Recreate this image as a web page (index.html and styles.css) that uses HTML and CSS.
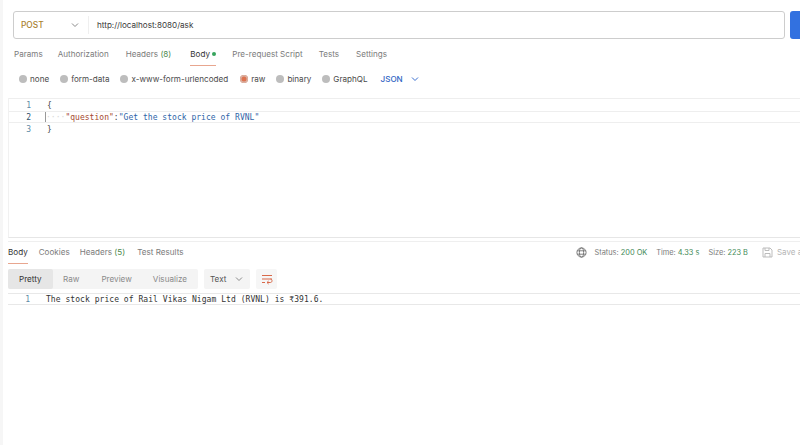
FILE: index.html
```html
<!DOCTYPE html>
<html lang="en">
<head>
<meta charset="utf-8">
<title>POST ask</title>
<link rel="stylesheet" href="styles.css">
</head>
<body>
<div class="app">
  <div class="urlrow">
    <div class="urlbox">
      <div class="method"><span class="post">POST</span>
        <svg class="chev" width="8" height="6" viewBox="0 0 8 6"><path d="M1 1.5l3 3 3-3" fill="none" stroke="#8a8a8a" stroke-width="1"/></svg>
      </div>
      <div class="url">http://localhost:8080/ask</div>
    </div>
    <div class="send"></div>
  </div>
  <div class="tabs reqtabs">
    <span class="tab t1">Params</span>
    <span class="tab t2">Authorization</span>
    <span class="tab t3">Headers <em>(8)</em></span>
    <span class="tab t4 active">Body <i class="dot"></i></span>
    <span class="tab t5">Pre-request Script</span>
    <span class="tab t6">Tests</span>
    <span class="tab t7">Settings</span>
  </div>
  <div class="bodyopts">
    <span class="opt o1"><i class="radio"></i>none</span>
    <span class="opt o2"><i class="radio"></i>form-data</span>
    <span class="opt o3"><i class="radio"></i>x-www-form-urlencoded</span>
    <span class="opt o4"><i class="radio on"></i>raw</span>
    <span class="opt o5"><i class="radio"></i>binary</span>
    <span class="opt o6"><i class="radio"></i>GraphQL</span>
    <span class="lang">JSON
      <svg width="8" height="6" viewBox="0 0 8 6"><path d="M1 1.5l3 3 3-3" fill="none" stroke="#3a6fd0" stroke-width="1"/></svg>
    </span>
  </div>
  <div class="editor">
    <div class="line"><span class="num">1</span><span class="code">{</span></div>
    <div class="line current"><span class="num dark">2</span><span class="code"><span class="ws">····</span><span class="key">"question"</span>:<span class="str">"Get the stock price of RVNL"</span></span></div>
    <div class="line"><span class="num">3</span><span class="code">}</span></div>
  </div>
  <div class="resphead">
    <div class="tabs resptabs">
      <span class="tab r1 active">Body</span>
      <span class="tab r2">Cookies</span>
      <span class="tab r3">Headers <em>(5)</em></span>
      <span class="tab r4">Test Results</span>
    </div>
    <div class="stats">
      <svg class="globe" width="11" height="11" viewBox="0 0 11 11" fill="none" stroke="#6f6f6f" stroke-width=".9"><circle cx="5.5" cy="5.5" r="4.6"/><ellipse cx="5.5" cy="5.5" rx="2.1" ry="4.6"/><path d="M1.2 3.8h8.6M1.2 7.2h8.6"/></svg>
      <span class="stat">Status: <b>200 OK</b></span>
      <span class="stat">Time: <b>4.33 s</b></span>
      <span class="stat">Size: <b>223 B</b></span>
      <span class="save">
        <svg width="11" height="11" viewBox="0 0 11 11" fill="none" stroke="#b5b5b5" stroke-width=".9"><path d="M1 1h7l2 2v7H1z"/><path d="M3 1v2.5h4V1M3 10V6.5h5V10"/></svg>
        Save as
      </span>
    </div>
  </div>
  <div class="viewbar">
    <div class="seg">
      <span class="segitem sel">Pretty</span>
      <span class="segitem raw">Raw</span>
      <span class="segitem prev">Preview</span>
      <span class="segitem vis">Visualize</span>
    </div>
    <div class="fmt">Text
      <svg width="8" height="6" viewBox="0 0 8 6"><path d="M1 1.5l3 3 3-3" fill="none" stroke="#8a8a8a" stroke-width="1"/></svg>
    </div>
    <div class="wrap">
      <svg width="12" height="11" viewBox="0 0 12 11" fill="none" stroke="#d9694a" stroke-width="1"><path d="M1 1.5h10M1 5h10M1 8.5h3M6 8.5h3.5c2 0 2-3.5 0-3.5M7.6 7l-1.6 1.5 1.6 1.5"/></svg>
    </div>
  </div>
  <div class="output">
    <span class="num">1</span><span class="outtext">The stock price of Rail Vikas Nigam Ltd (RVNL) is ₹391.6.</span>
  </div>
</div>
</body>
</html>
```
FILE: styles.css
```css
* { box-sizing: border-box; }
html, body { margin: 0; height: 100%; background: #fff; overflow: hidden; }
body { font-family: Inter, "Liberation Sans", sans-serif; color: #6b6b6b; font-size: 8.1px; }
.app { width: 800px; height: 445px; border-left: 3px solid #f6f6f6; padding-top: 11px; overflow: hidden; }

.urlrow { display: flex; gap: 5px; margin-left: 10px; height: 28px; width: 800px; }
.urlbox { width: 772px; flex: none; border: 1px solid #cdcdcd; border-radius: 3px; display: flex; align-items: center; }
.method { width: 75px; height: 18px; padding-left: 7px; display: flex; align-items: center; border-right: 1px solid #efefef; }
.post { color: #a9812f; font-weight: 500; font-size: 8.4px; }
.chev { margin-left: 27px; }
.url { padding-left: 8px; color: #3a3a3a; font-size: 8.1px; }
.send { width: 40px; flex: none; background: #3271e0; border-radius: 3px 0 0 3px; }

.tabs { display: flex; }
.tab { color: #7b7b7b; white-space: nowrap; }
.tab em { font-style: normal; color: #4d8a4d; }
.tab.active { color: #333; border-bottom: 1px solid #e8a68f; }
.reqtabs { margin-left: 11px; margin-top: 7px; height: 20px; }
.reqtabs .tab { padding-top: 2px; height: 20px; line-height: 12px; }
.t2 { margin-left: 15px; } .t3 { margin-left: 17px; } .t4 { margin-left: 19px; }
.t5 { margin-left: 16px; } .t6 { margin-left: 16px; } .t7 { margin-left: 17px; }
.dot { display: inline-block; width: 4px; height: 4px; border-radius: 50%; background: #37a45d; margin-left: 0; vertical-align: 1px; }

.bodyopts { display: flex; align-items: center; margin-left: 16px; margin-top: 6px; height: 14px; color: #4a4a4a; }
.opt { display: flex; align-items: center; gap: 3px; margin-right: 11px; white-space: nowrap; }
.o3 { margin-right: 12px; }
.radio { width: 8px; height: 8px; border-radius: 50%; background: #bdbdbd; flex: none; }
.radio.on { background: #dd7350; box-shadow: inset 0 0 0 1.5px #d9b3a5; }
.lang { color: #2f65c4; font-weight: 500; margin-left: 2px; display: flex; align-items: center; gap: 8px; }

.editor { margin-left: 5px; margin-top: 12px; height: 140px; width: 800px; border-top: 1px solid #eeeeee; border-bottom: 1px solid #e6e6e6; border-left: 1px solid #f1f1f1; font-family: "DejaVu Sans Mono", monospace; font-size: 8px; }
.line { display: flex; height: 12px; line-height: 12px; color: #444; }
.line .num, .line .code { padding-top: 1px; }
.line.current { border-top: 1px solid #eeeeee; border-bottom: 1px solid #eeeeee; line-height: 10px; }
.num { width: 22px; text-align: right; color: #5d8aa5; flex: none; font-family: "DejaVu Sans Mono", monospace; font-size: 8px; }
.num.dark { color: #2f4f6a; }
.code { margin-left: 16px; white-space: pre; letter-spacing: .03px; }
.current .code { border-left: 1px solid #999; margin-left: 14px; }
.ws { color: #d6d6d6; }
.key { color: #a5492f; }
.str { color: #2f65a8; }

.resphead { display: flex; margin-left: 5px; margin-top: 3px; height: 28px; border-top: 1px solid #efefef; width: 792px; }
.resptabs { padding-top: 3px; flex: none; }
.resptabs .tab { height: 19px; line-height: 14px; }
.r2 { margin-left: 11px; } .r3 { margin-left: 10px; } .r4 { margin-left: 12px; }
.stats { display: flex; align-items: center; gap: 9px; height: 20px; color: #7b7b7b; font-size: 7.4px; white-space: nowrap; margin-left: 393px; flex: none; }
.globe { margin-right: -2px; }
.stat b { font-weight: 400; color: #3f8a58; }
.save { display: flex; align-items: center; gap: 4px; color: #b5b5b5; margin-left: 5px; font-size: 8px; }

.viewbar { display: flex; margin-left: 5px; gap: 6px; height: 24px; }
.seg { display: flex; background: #f4f4f4; border-radius: 2px; width: 190px; height: 20px; }
.segitem { line-height: 20px; color: #8a8a8a; padding: 0 10.5px; white-space: nowrap; }
.segitem.prev { margin-left: 1px; }
.segitem.sel { background: #e6e6e6; color: #333; border-radius: 2px; padding: 0 11px; }
.fmt { width: 46px; background: #f4f4f4; border-radius: 2px; height: 20px; display: flex; align-items: center; gap: 9px; padding-left: 6px; color: #555; }
.wrap { width: 21px; height: 20px; background: #f6f6f6; border-radius: 2px; display: flex; align-items: center; justify-content: center; }

.output { display: flex; margin-left: 5px; height: 12px; border-top: 1px solid #e8e8e8; border-bottom: 1px solid #e8e8e8; width: 800px; font-family: "DejaVu Sans Mono", monospace; font-size: 8px; line-height: 10px; }
.output .num, .outtext { padding-top: 1px; }
.outtext { color: #333; margin-left: 16px; white-space: pre; letter-spacing: .05px; }
```
